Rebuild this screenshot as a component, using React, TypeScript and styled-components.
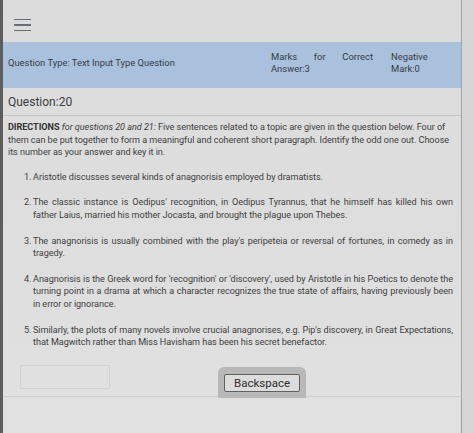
import styled, { createGlobalStyle } from 'styled-components';

const GlobalStyle = createGlobalStyle`
	html, body {
		margin: 0;
		padding: 0;
		background: #d9d9d9;
	}
	body {
		font-family: Roboto, "Liberation Sans", Arial, sans-serif;
		color: #3a3a3a;
	}
`;

const Screen = styled.div`
	width: 474px;
	height: 433px;
	overflow: hidden;
	display: flex;
	background: linear-gradient(180deg, #dcdcdc 0%, #dedede 60%, #e1e1e1 100%);
`;

const Frame = styled.div`
	width: 462px;
	flex-shrink: 0;
	display: flex;
	flex-direction: column;
	border-left: 3px solid #5d5d5d;
	border-right: 1px solid #a3a3a3;
	box-sizing: border-box;
`;

const SideStrip = styled.div`
	flex: 1;
	background: #d6d6d6;
`;

const TopBar = styled.div`
	height: 42px;
	display: flex;
	align-items: center;
	padding-left: 11px;
`;

const Burger = styled.div`
	width: 17px;
	display: flex;
	flex-direction: column;
	gap: 4px;
	margin-top: 8px;
	span {
		display: block;
		height: 1.5px;
		background: #6a6d78;
	}
`;

const InfoBar = styled.div`
	height: 46px;
	background: #a9c1dc;
	display: flex;
	align-items: center;
	padding: 0 8px 0 5px;
	font-size: 9.4px;
	line-height: 12.5px;
	color: #363c47;
`;

const TypeLabel = styled.div`
	flex: 1;
	margin-top: -4px;
`;

const MarksCol = styled.div<{ $w: number }>`
	width: ${(p) => p.$w}px;
	text-align: justify;
	text-align-last: left;
	margin-right: 18px;
	margin-top: -4px;
`;

const QuestionNo = styled.div`
	font-size: 12px;
	color: #3d3d3d;
	padding: 7px 5px 6px;
	border-bottom: 1px solid #c4c4c4;
`;

const Body = styled.div`
	padding: 5px 8px 0 5px;
	font-size: 9.1px;
	line-height: 12.6px;
	letter-spacing: -0.045px;
	color: #3e3e3e;
`;

const Directions = styled.p`
	margin: 0 0 12px;
	b {
		font-weight: 700;
		color: #333;
	}
	i {
		font-style: italic;
	}
`;

const List = styled.ol`
	margin: 0;
	padding: 0 0 0 16px;
	list-style: none;
`;

const Item = styled.li`
	display: flex;
	text-align: justify;
	margin-bottom: 13px;
	&:last-child {
		margin-bottom: 10px;
	}
	span:first-child {
		width: 9px;
		flex-shrink: 0;
	}
`;

const Actions = styled.div`
	display: flex;
	align-items: flex-start;
	padding: 6px 0 0 17px;
	border-bottom: 1px solid #cdcdcd;
	height: 38px;
	box-sizing: border-box;
`;

const AnswerBox = styled.div`
	width: 90px;
	height: 24px;
	border: 1px solid #d2d2d2;
	box-sizing: border-box;
`;

const KeyPad = styled.div`
	margin-left: 108px;
	margin-top: 2px;
	padding: 5px 6px 6px;
	background: #b8b8b8;
	border-radius: 6px 6px 0 0;
`;

const KeyButton = styled.button`
	font-family: Roboto, "Liberation Sans", Arial, sans-serif;
	font-size: 11.5px;
	color: #2f2f2f;
	background: #dcdcdc;
	border: 1px solid #5f5f5f;
	border-radius: 2px;
	padding: 1px 9px;
	line-height: 14px;
`;

const items: string[] = [
	'Aristotle discusses several kinds of anagnorisis employed by dramatists.',
	"The classic instance is Oedipus' recognition, in Oedipus Tyrannus, that he himself has killed his own father Laius, married his mother Jocasta, and brought the plague upon Thebes.",
	"The anagnorisis is usually combined with the play's peripeteia or reversal of fortunes, in comedy as in tragedy.",
	"Anagnorisis is the Greek word for 'recognition' or 'discovery', used by Aristotle in his Poetics to denote the turning point in a drama at which a character recognizes the true state of affairs, having previously been in error or ignorance.",
	"Similarly, the plots of many novels involve crucial anagnorises, e.g. Pip's discovery, in Great Expectations, that Magwitch rather than Miss Havisham has been his secret benefactor."
];

export default function App() {
	return (
		<>
			<GlobalStyle />
			<Screen>
				<Frame>
					<TopBar>
						<Burger>
							<span />
							<span />
							<span />
						</Burger>
					</TopBar>
					<InfoBar>
						<TypeLabel>Question Type: Text Input Type Question</TypeLabel>
						<MarksCol $w={102}>Marks for Correct Answer:3</MarksCol>
						<MarksCol $w={44}>Negative Mark:0</MarksCol>
					</InfoBar>
					<QuestionNo>Question:20</QuestionNo>
					<Body>
						<Directions>
							<b>DIRECTIONS</b> <i>for questions 20 and 21:</i> Five sentences related to a topic are
							given in the question below. Four of them can be put together to form a meaningful and
							coherent short paragraph. Identify the odd one out. Choose its number as your answer and
							key it in.
						</Directions>
						<List>
							{items.map((text, i) => (
								<Item key={i}>
									<span>{i + 1}.</span>
									<span>{text}</span>
								</Item>
							))}
						</List>
					</Body>
					<Actions>
						<AnswerBox />
						<KeyPad>
							<KeyButton>Backspace</KeyButton>
						</KeyPad>
					</Actions>
				</Frame>
				<SideStrip />
			</Screen>
		</>
	);
}
